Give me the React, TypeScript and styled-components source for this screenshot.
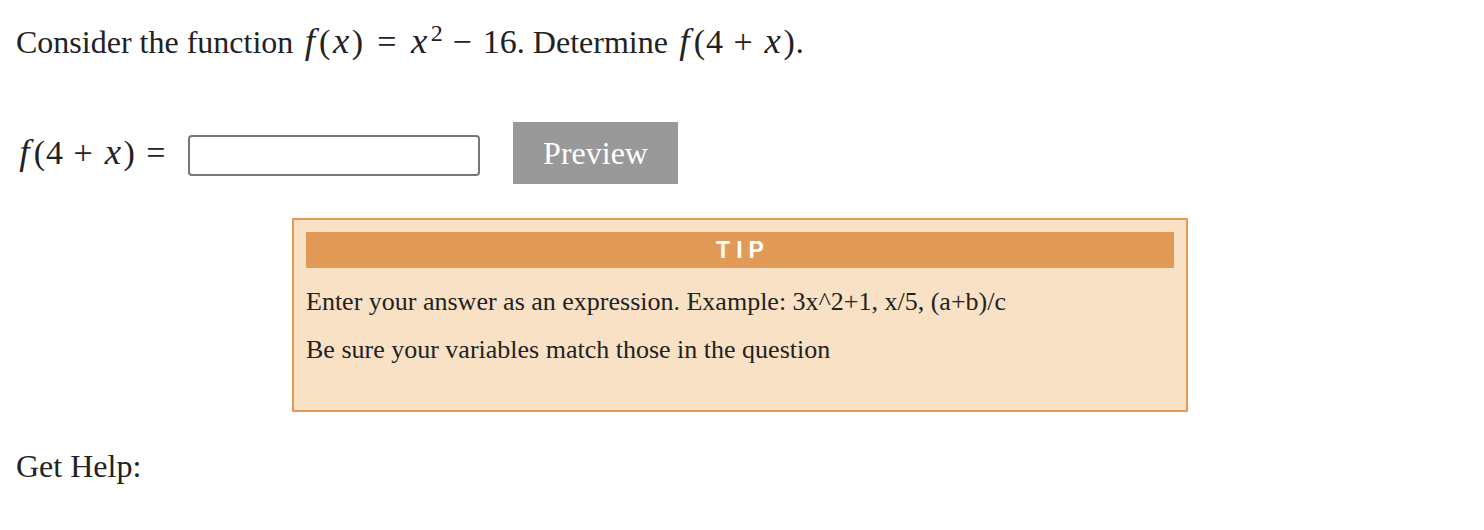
import React from "react";
import styled, { createGlobalStyle } from "styled-components";

const Global = createGlobalStyle`
  html, body { margin: 0; padding: 0; background: #ffffff; }
  body {
    font-family: "Liberation Serif", "Times New Roman", serif;
    color: #222222;
  }
`;

const Page = styled.div`
  padding: 0 16px;
  font-size: 32px;
  line-height: 38px;
`;

const Question = styled.p`
  margin: 23px 0 0;
  height: 38px;
  white-space: nowrap;
`;

/* Math typeset with TeX-like advance widths (in em of the math font). */
const MathSpan = styled.span`
  font-family: "Liberation Serif", "Times New Roman", serif;
  font-size: 34px;
  white-space: nowrap;
`;

const Tok = styled.span<{ $w: number; $it?: boolean }>`
  display: inline-block;
  width: ${(p) => p.$w}em;
  text-align: center;
  line-height: 30px;
  font-style: ${(p) => (p.$it ? "italic" : "normal")};
  font-size: ${(p) => (p.$it ? "1.08em" : "1em")};
`;

const SupTok = styled.span`
  display: inline-block;
  width: 0.52em;
  text-align: left;
  padding-left: 2px;
  box-sizing: border-box;
  font-size: 24px;
  line-height: 20px;
  position: relative;
  top: -12px;
`;

const Gap = styled.span<{ $w: number }>`
  display: inline-block;
  width: ${(p) => p.$w}em;
`;

const AnswerRow = styled.div`
  display: flex;
  align-items: center;
  margin-top: 61px;
  height: 62px;
`;

const Label = styled.span`
  white-space: nowrap;
  line-height: 38px;
`;

const AnswerInput = styled.input`
  box-sizing: border-box;
  width: 292px;
  height: 41px;
  margin: 5px 0 0 19px;
  border: 2px solid #777777;
  border-radius: 4px;
  background: #ffffff;
  font-family: "Liberation Serif", serif;
  font-size: 26px;
  padding: 0 8px;
  outline: none;
`;

const PreviewButton = styled.button`
  box-sizing: border-box;
  height: 62px;
  width: 165px;
  margin-left: 33px;
  border: none;
  background: #999999;
  color: #ffffff;
  font-family: "Liberation Serif", "Times New Roman", serif;
  font-size: 32px;
  padding: 0;
  cursor: pointer;
`;

const TipBox = styled.div`
  box-sizing: border-box;
  width: 896px;
  margin: 34px 0 0 276px;
  border: 2px solid #e39b58;
  background: #f9e1c6;
  padding: 12px 12px 46px;
`;

const TipHeader = styled.div`
  height: 36px;
  background: #e29b57;
  color: #ffffff;
  font-family: "Liberation Sans", Arial, sans-serif;
  font-weight: bold;
  font-size: 23px;
  letter-spacing: 6px;
  text-indent: 6px;
  display: flex;
  align-items: center;
  justify-content: center;
`;

const TipText = styled.p`
  margin: 19px 0 0;
  font-size: 26px;
  line-height: 29px;
  color: #222222;
`;

const Help = styled.div`
  margin-top: 35px;
`;

const FOfFourPlusX = () => (
  <>
    <Tok $w={0.46} $it>f</Tok>
    <Tok $w={0.389}>(</Tok>
    <Tok $w={0.5}>4</Tok>
    <Gap $w={0.2} />
    <Tok $w={0.778}>+</Tok>
    <Gap $w={0.2} />
    <Tok $w={0.53} $it>x</Tok>
    <Tok $w={0.389}>)</Tok>
  </>
);

export default function App() {
  return (
    <>
      <Global />
      <Page>
        <Question>
          Consider the function{" "}
          <MathSpan>
            <Tok $w={0.46} $it>f</Tok>
            <Tok $w={0.389}>(</Tok>
            <Tok $w={0.53} $it>x</Tok>
            <Tok $w={0.389}>)</Tok>
            <Gap $w={0.278} />
            <Tok $w={0.778}>=</Tok>
            <Gap $w={0.278} />
            <Tok $w={0.53} $it>x</Tok>
            <SupTok>2</SupTok>
            <Gap $w={0.222} />
            <Tok $w={0.778}>−</Tok>
            <Gap $w={0.222} />
            <Tok $w={0.5}>1</Tok>
            <Tok $w={0.5}>6</Tok>
          </MathSpan>
          . Determine{" "}
          <MathSpan>
            <FOfFourPlusX />
          </MathSpan>
          .
        </Question>
        <AnswerRow>
          <Label>
            <MathSpan>
              <FOfFourPlusX />
              <Gap $w={0.2} />
              <Tok $w={0.778}>=</Tok>
            </MathSpan>
          </Label>
          <AnswerInput type="text" aria-label="answer" />
          <PreviewButton type="button">Preview</PreviewButton>
        </AnswerRow>
        <TipBox>
          <TipHeader>TIP</TipHeader>
          <TipText>
            Enter your answer as an expression. Example: 3x^2+1, x/5, (a+b)/c
          </TipText>
          <TipText>Be sure your variables match those in the question</TipText>
        </TipBox>
        <Help>Get Help:</Help>
      </Page>
    </>
  );
}
